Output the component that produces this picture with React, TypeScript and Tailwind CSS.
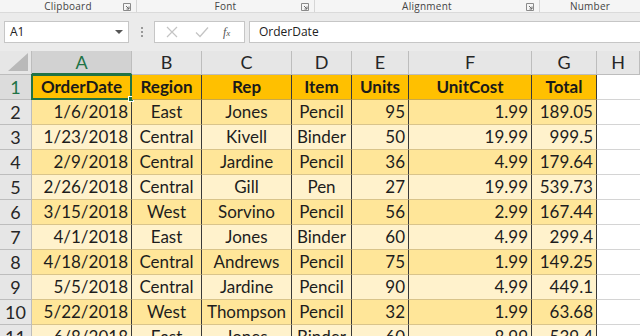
import React from "react";

const rows = [
  ["1/6/2018", "East", "Jones", "Pencil", "95", "1.99", "189.05"],
  ["1/23/2018", "Central", "Kivell", "Binder", "50", "19.99", "999.5"],
  ["2/9/2018", "Central", "Jardine", "Pencil", "36", "4.99", "179.64"],
  ["2/26/2018", "Central", "Gill", "Pen", "27", "19.99", "539.73"],
  ["3/15/2018", "West", "Sorvino", "Pencil", "56", "2.99", "167.44"],
  ["4/1/2018", "East", "Jones", "Binder", "60", "4.99", "299.4"],
  ["4/18/2018", "Central", "Andrews", "Pencil", "75", "1.99", "149.25"],
  ["5/5/2018", "Central", "Jardine", "Pencil", "90", "4.99", "449.1"],
  ["5/22/2018", "West", "Thompson", "Pencil", "32", "1.99", "63.68"],
  ["6/8/2018", "East", "Jones", "Binder", "60", "8.99", "539.4"],
];

const headers = ["OrderDate", "Region", "Rep", "Item", "Units", "UnitCost", "Total"];
const cols = ["A", "B", "C", "D", "E", "F", "G", "H"];
// right aligned columns
const rightCols = [0, 4, 5, 6];

function Launcher() {
  return (
    <svg width="8" height="8" viewBox="0 0 8 8" className="shrink-0">
      <path d="M0.5 0.5h7v7h-7z" fill="none" stroke="#8a8a8a" strokeWidth="1" />
      <path d="M3 3l3 3M6 3.5V6H3.5" fill="none" stroke="#6a6a6a" strokeWidth="1" />
    </svg>
  );
}

function Group({ label, width, launcher = true }: { label: string; width: string; launcher?: boolean }) {
  return (
    <div className={`${width} relative flex items-center justify-center border-r border-[#d6d6d6] h-full`}>
      <span className="text-[10px] text-[#444] tracking-wide">{label}</span>
      {launcher && (
        <div className="absolute right-[5px] top-[3px]">
          <Launcher />
        </div>
      )}
    </div>
  );
}

export default function App() {
  return (
    <div className="w-[640px] h-[336px] overflow-hidden bg-white font-['Lato','Liberation_Sans',sans-serif]">
      {/* Ribbon group labels */}
      <div className="h-[13px] flex bg-[#f5f5f5] border-b border-[#dadada] font-['Open_Sans','Liberation_Sans',sans-serif]">
        <Group label="Clipboard" width="w-[137px]" />
        <Group label="Font" width="w-[178px]" />
        <Group label="Alignment" width="w-[225px]" />
        <div className="flex-1 flex items-center justify-center">
          <span className="text-[10px] text-[#444] tracking-wide">Number</span>
        </div>
      </div>

      {/* Formula bar */}
      <div className="h-[38px] bg-[#ebebeb] flex items-start pt-[8px] font-['Open_Sans','Liberation_Sans',sans-serif]">
        <div className="ml-[4px] w-[125px] h-[22px] bg-white border border-[#c6c6c6] flex items-center justify-between px-[5px]">
          <span className="text-[12px] text-[#222]">A1</span>
          <svg width="8" height="5" viewBox="0 0 8 5">
            <path d="M0 0h8L4 4z" fill="#555" />
          </svg>
        </div>
        <div className="w-[25px] h-[22px] flex flex-col items-center justify-center gap-[2px]">
          <span className="w-[2px] h-[2px] bg-[#999]" />
          <span className="w-[2px] h-[2px] bg-[#999]" />
          <span className="w-[2px] h-[2px] bg-[#999]" />
        </div>
        <div className="w-[91px] h-[22px] bg-white border border-[#c6c6c6] flex items-center">
          <svg width="12" height="12" viewBox="0 0 12 12" className="ml-[11px]">
            <path d="M1 1l10 10M11 1L1 11" stroke="#c4c4c4" strokeWidth="1.2" />
          </svg>
          <svg width="14" height="12" viewBox="0 0 14 12" className="ml-[17px]">
            <path d="M1 6.5l4 4 8-9" fill="none" stroke="#c4c4c4" strokeWidth="1.3" />
          </svg>
          <span className="ml-[14px] text-[12px] italic text-[#555] font-['Liberation_Serif',serif]">
            f<span className="text-[9px]">x</span>
          </span>
        </div>
        <div className="ml-[4px] flex-1 h-[22px] bg-white border border-[#c6c6c6] border-r-0 flex items-center pl-[9px]">
          <span className="text-[12px] text-[#222]">OrderDate</span>
        </div>
      </div>

      {/* Sheet */}
      <div className="grid grid-cols-[32px_100px_70px_90px_60px_57px_123px_65px_1fr] grid-rows-[24px_repeat(11,25px)] text-[17px] text-[#1d1d1d]">
        {/* corner */}
        <div className="bg-[#e6e6e6] border-r border-b border-[#bdbdbd] relative">
          <svg width="20" height="18" viewBox="0 0 20 18" className="absolute right-[3px] bottom-[3px]">
            <path d="M20 0V18H0z" fill="#b9b9b9" />
          </svg>
        </div>
        {cols.map((c, i) => (
          <div
            key={c}
            className={
              i === 0
                ? "bg-[#d2d2d2] border-b-2 border-b-[#217346] border-r border-r-[#bdbdbd] flex items-center justify-center text-[18px] text-[#217346]"
                : "bg-[#e6e6e6] border-b border-r border-[#bdbdbd] flex items-center justify-center text-[18px] text-[#262626]"
            }
          >
            {c}
          </div>
        ))}

        {/* header row 1 */}
        <div className="bg-[#dcdcdc] border-r border-b border-[#bdbdbd] flex items-center justify-center text-[18px] text-[#217346]">
          1
        </div>
        {headers.map((h, i) => (
          <div
            key={h}
            className={`bg-[#ffc000] border-b border-[#c9a84a] border-r border-r-[#3a3a3a] relative flex items-center justify-center font-bold text-[#1a1a1a]`}
          >
            {h}
            {i === 0 && (
              <div className="absolute -left-px -top-px -right-px -bottom-px border-2 border-[#217346]">
                <div className="absolute -right-[4px] -bottom-[4px] w-[6px] h-[6px] bg-[#217346] border border-white" />
              </div>
            )}
          </div>
        ))}
        <div className="border-b border-[#d4d4d4]" />

        {rows.map((r, ri) => {
          const bg = ri % 2 === 0 ? "bg-[#ffe699]" : "bg-[#fff2cc]";
          return (
            <React.Fragment key={ri}>
              <div className="bg-[#e6e6e6] border-r border-b border-[#bdbdbd] flex items-center justify-center text-[18px] text-[#262626]">
                {ri + 2}
              </div>
              {r.map((v, ci) => (
                <div
                  key={ci}
                  className={`${bg} border-b border-[#d9c48a] border-r border-r-[#3a3a3a] flex items-center whitespace-nowrap overflow-hidden ${
                    rightCols.includes(ci) ? "justify-end pr-[3px]" : "justify-center"
                  }`}
                >
                  {v}
                </div>
              ))}
              <div className="border-b border-[#d4d4d4]" />
            </React.Fragment>
          );
        })}
      </div>
    </div>
  );
}
